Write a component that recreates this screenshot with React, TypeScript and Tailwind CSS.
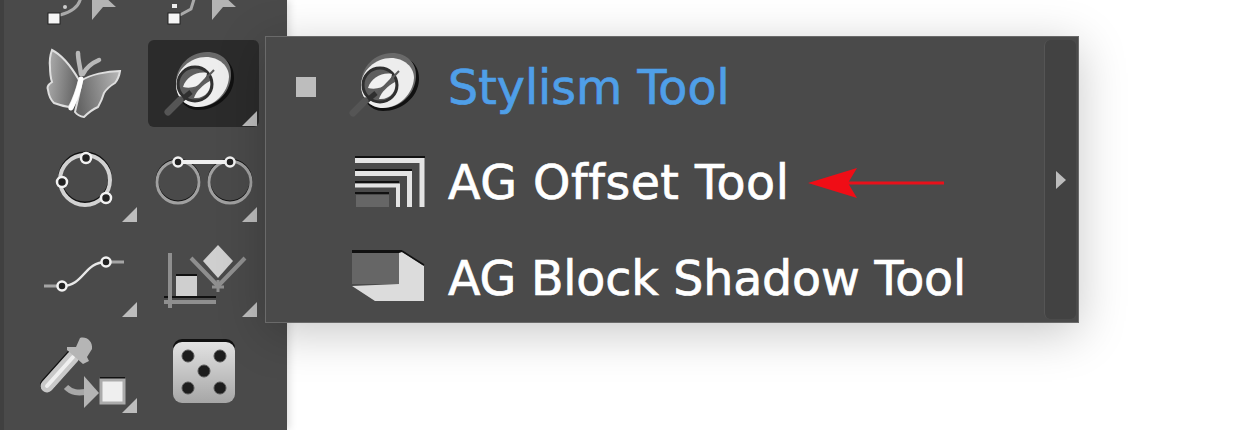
import type { ReactNode } from 'react'

const corner = (x: number, y: number) => `${x + 15},${y} ${x + 15},${y + 15} ${x},${y + 15}`

function Cell({ box, selected, children }: { box: string; selected?: boolean; children: ReactNode }) {
  return (
    <div className="h-[97px] w-[120px] pt-1">
      <div className={`h-[87px] w-[111px] rounded-md ${selected ? 'bg-[#2b2b2b]' : ''}`}>
        <svg width="111" height="87" viewBox={box} className="block overflow-visible">
          {children}
        </svg>
      </div>
    </div>
  )
}

// drawn around (203,83), the spot it has in the toolbar
function StylismGlyph() {
  return (
    <>
      <path d="M176 84C176 66 190 54 208 54C225 54 235 65 234 79C233 97 216 110 198 110C185 110 176 98 176 84Z" fill="#111" />
      <path d="M176 83C176 66 190 52 207 52C222 52 232 62 231 76C230 94 215 107 198 107C185 107 176 97 176 83Z" fill="#696969" />
      <path d="M176 85C176 70 190 57 206 57C219 57 229 66 229 77C228 93 214 107 198 107C185 107 176 97 176 85Z" fill="#ededed" />
      <circle cx="195" cy="84" r="17" fill="#5e5e5e" stroke="#2f2f2f" strokeWidth="3" />
      <path d="M183 87C186 77 197 71 207 73C206 82 196 90 183 87Z" fill="#f0f0f0" />
      <path d="M194 98C196 91 203 85 210 81C212 90 205 99 194 98Z" fill="#f0f0f0" />
      <path d="M214 70L192 93" stroke="#5a5a5a" strokeWidth="2" />
      <path d="M191 92L179 102" stroke="#2f2f2f" strokeWidth="5" />
      <path d="M180 100L168 112" stroke="#555" strokeWidth="7" strokeLinecap="round" />
    </>
  )
}

function Node({ x, y, r = 5 }: { x: number; y: number; r?: number }) {
  return <circle cx={x} cy={y} r={r} fill="#222" stroke="#f2f2f2" strokeWidth="2.5" />
}

function Butterfly() {
  return (
    <>
      <defs>
        <linearGradient id="wingL" x1="0" y1="0" x2="1" y2="0.2">
          <stop offset="0" stopColor="#b0b0b0" />
          <stop offset="1" stopColor="#666" />
        </linearGradient>
        <linearGradient id="wingR" x1="1" y1="0" x2="0" y2="0.2">
          <stop offset="0" stopColor="#b8b8b8" />
          <stop offset="1" stopColor="#666" />
        </linearGradient>
      </defs>
      <path d="M78 53C78 60 80 66 81 74M99 60C92 63 86 68 83 74" stroke="#b8b8b8" strokeWidth="4.5" strokeLinecap="round" fill="none" />
      <path
        d="M79 80C72 68 62 55 52 50Q49 58 50 67Q50 76 52 82Q46 86 48 90Q49 98 54 103Q62 106 69 107Q75 96 79 80Z"
        fill="url(#wingL)"
        stroke="#dedede"
        strokeWidth="2"
      />
      <path
        d="M82 80C90 75 106 71 120 71Q119 78 115 83Q108 87 104 93Q102 100 98 107Q91 110 84 117Q78 116 75 112Q79 96 82 80Z"
        fill="url(#wingR)"
        stroke="#dedede"
        strokeWidth="2"
      />
      <path d="M81 79C79 90 75 100 71 108" stroke="#fff" strokeWidth="5" strokeLinecap="round" fill="none" />
    </>
  )
}

export default function App() {
  return (
    <div className="relative flex h-[430px] w-[1256px] overflow-hidden bg-white font-['DejaVu_Sans',sans-serif]">
      <aside className="h-full w-[287px] shrink-0 overflow-hidden border-l-[4px] border-[#404040] bg-[#4a4a4a] pl-6 shadow-[2px_0_8px_rgba(0,0,0,0.15)]">
        <div className="-mt-[61px] grid grid-cols-[120px_120px] grid-rows-[97px_97px_97px_97px_97px]">
          <Cell box="28 -57 111 87">
            <path d="M60 15C72 12 80 6 81 -4" stroke="#aaa" strokeWidth="3" fill="none" />
            <circle cx="65" cy="7" r="2" fill="#ccc" />
            <rect x="48" y="13" width="12" height="11" fill="#f5f5f5" stroke="#222" strokeWidth="1" />
            <polygon points="92,-4 92,20 103,7 116,7 104,-4" fill="#b4b4b4" />
          </Cell>
          <Cell box="148 -57 111 87">
            <path d="M180 15L191 9L195 -4" stroke="#aaa" strokeWidth="3" fill="none" />
            <rect x="172" y="4" width="5" height="4" fill="#eee" />
            <rect x="168" y="13" width="12" height="11" fill="#f5f5f5" stroke="#222" strokeWidth="1" />
            <polygon points="212,-4 212,20 223,7 236,7 224,-4" fill="#b4b4b4" />
          </Cell>

          <Cell box="28 40 111 87">
            <Butterfly />
          </Cell>
          <Cell box="148 40 111 87" selected>
            <StylismGlyph />
            <polygon points={corner(242, 111)} fill="#bdbdbd" />
          </Cell>

          <Cell box="28 137 111 87">
            <circle cx="85" cy="178.5" r="25" fill="none" stroke="#111" strokeWidth="4" />
            <circle cx="85" cy="180" r="25" fill="none" stroke="#d2d2d2" strokeWidth="4" />
            <Node x={86} y={158} />
            <Node x={62} y={182} />
            <Node x={106} y={198} />
            <polygon points={corner(122, 207)} fill="#bdbdbd" />
          </Cell>
          <Cell box="148 137 111 87">
            <circle cx="178" cy="181" r="21" fill="none" stroke="#111" strokeWidth="3" />
            <circle cx="230" cy="181" r="21" fill="none" stroke="#111" strokeWidth="3" />
            <circle cx="178" cy="182" r="21" fill="none" stroke="#a0a0a0" strokeWidth="3" />
            <circle cx="230" cy="182" r="21" fill="none" stroke="#a0a0a0" strokeWidth="3" />
            <path d="M178 162H230" stroke="#f0f0f0" strokeWidth="4" />
            <Node x={178} y={162} r={4.5} />
            <Node x={230} y={162} r={4.5} />
            <polygon points={corner(242, 207)} fill="#bdbdbd" />
          </Cell>

          <Cell box="28 234 111 87">
            <path d="M44 286H62M106 262H124" stroke="#a5a5a5" strokeWidth="3" />
            <path d="M62 286C84 286 84 262 106 262" stroke="#e8e8e8" strokeWidth="2.5" fill="none" />
            <Node x={62} y={286} r={4.5} />
            <Node x={106} y={262} r={4.5} />
            <polygon points={corner(122, 302)} fill="#bdbdbd" />
          </Cell>
          <Cell box="148 234 111 87">
            <path d="M164 297H216" stroke="#111" strokeWidth="2" />
            <path d="M170 253V308M164 302H216" stroke="#8f8f8f" strokeWidth="4" />
            <rect x="176" y="274" width="21" height="2" fill="#111" />
            <rect x="176" y="276" width="21" height="20" fill="#cfcfcf" />
            <path d="M191 258L218 286L245 258" stroke="#8f8f8f" strokeWidth="4" fill="none" />
            <path d="M218 280V292M212 287H224" stroke="#8f8f8f" strokeWidth="3" />
            <polygon points="218,245 233,261 218,278 203,261" fill="#cfcfcf" />
            <polygon points={corner(242, 302)} fill="#bdbdbd" />
          </Cell>

          <Cell box="28 331 111 87">
            <defs>
              <linearGradient id="dice" x1="0" y1="0" x2="0" y2="1">
                <stop offset="0" stopColor="#e2e2e2" />
                <stop offset="1" stopColor="#a6a6a6" />
              </linearGradient>
            </defs>
            <path d="M47 386L73 357" stroke="#111" strokeWidth="14" strokeLinecap="round" transform="translate(0 -1)" />
            <path d="M47 386L73 357" stroke="#c8c8c8" strokeWidth="13" strokeLinecap="round" />
            <path d="M47 386L73 357" stroke="#efefef" strokeWidth="4" strokeLinecap="round" />
            <path d="M67 347L76 347L80 338C86 336 93 341 92 349L87 357L89 361L83 364L67 350Z" fill="#b5b5b5" />
            <path d="M66 387C72 393 78 393 86 392" stroke="#a8a8a8" strokeWidth="6" fill="none" />
            <polygon points="84,376 99,393 84,408" fill="#b5b5b5" />
            <rect x="100" y="377" width="25" height="2" fill="#111" />
            <rect x="101" y="380" width="23" height="23" fill="#efefef" stroke="#ababab" strokeWidth="3" />
            <polygon points={corner(122, 398)} fill="#bdbdbd" />
          </Cell>
          <Cell box="148 331 111 87">
            <rect x="173" y="339" width="62" height="30" rx="9" fill="#111" />
            <rect x="173" y="342" width="62" height="61" rx="9" fill="url(#dice)" />
            {[
              [188, 356],
              [220, 356],
              [204, 371],
              [188, 388],
              [220, 388],
            ].map(([cx, cy]) => (
              <circle key={`${cx}-${cy}`} cx={cx} cy={cy} r="6" fill="#1d1d1d" stroke="#555" strokeWidth="1" />
            ))}
          </Cell>
        </div>
      </aside>

      {/* Flyout */}
      <div className="absolute left-[265px] top-[36px] flex h-[287px] w-[814px] border border-[#6a6a6a] bg-[#4a4a4a] shadow-[0_10px_45px_rgba(0,0,0,0.22)]">
        <div className="flex min-w-0 flex-1 flex-col pt-[3px]">
          <div className="flex h-[95px] items-center">
            <span className="ml-[30px] h-5 w-5 bg-[#bdbdbd]" />
            <svg width="80" height="70" viewBox="343 51 80 70" className="ml-[27px] shrink-0">
              <g transform="translate(185 0)">
                <StylismGlyph />
              </g>
            </svg>
            <span className="ml-[25px] text-[47.5px] leading-none text-[#4f9fe8] [-webkit-text-stroke:0.7px_#4f9fe8]">Stylism Tool</span>
          </div>
          <div className="flex h-[96px] items-center pl-[87px]">
            <svg width="80" height="60" viewBox="353 150 80 60" className="shrink-0">
              <path d="M355 154H425M355 167H412M355 179H399M355 190H389" stroke="#111" strokeWidth="2" />
              <path d="M355 157.5H422V204" stroke="#e4e4e4" strokeWidth="5" fill="none" />
              <path d="M355 170.5H409.5V204" stroke="#e4e4e4" strokeWidth="5" fill="none" />
              <path d="M355 182.5H398V204" stroke="#e4e4e4" strokeWidth="4" fill="none" />
              <rect x="356" y="192" width="33" height="12" fill="#666" />
            </svg>
            <span className="ml-[15px] text-[47.5px] leading-none tracking-[0.5px] text-white [-webkit-text-stroke:0.7px_white]">AG Offset Tool</span>
            <svg width="140" height="34" viewBox="806 165 140 34" className="ml-[17px] shrink-0">
              <path d="M848 182H944" stroke="#e9101a" strokeWidth="3" />
              <polygon points="808,182 857,167 848,182 857,197" fill="#f00d16" />
            </svg>
          </div>
          <div className="flex h-[92px] items-center pl-[83px]">
            <svg width="80" height="60" viewBox="349 245 80 60" className="shrink-0">
              <rect x="352" y="249" width="50" height="3" fill="#111" />
              <rect x="352" y="252" width="47" height="31" fill="#666" />
              <polygon points="402,251 424,265 424,300 375,300 352,285 399,283 399,252" fill="#dcdcdc" />
              <path d="M402 250L424 264" stroke="#111" strokeWidth="1.5" />
            </svg>
            <span className="ml-[19px] mt-[6px] text-[47.5px] leading-none tracking-[-0.2px] text-white [-webkit-text-stroke:0.7px_white]">AG Block Shadow Tool</span>
          </div>
        </div>
        <div className="my-[3px] mr-[2px] flex w-[32px] items-center justify-center rounded-md border-l border-[#555] bg-[#424242]">
          <svg width="12" height="18" viewBox="0 0 12 18">
            <polygon points="1,0 11,9 1,18" fill="#bdbdbd" />
          </svg>
        </div>
      </div>
    </div>
  )
}
